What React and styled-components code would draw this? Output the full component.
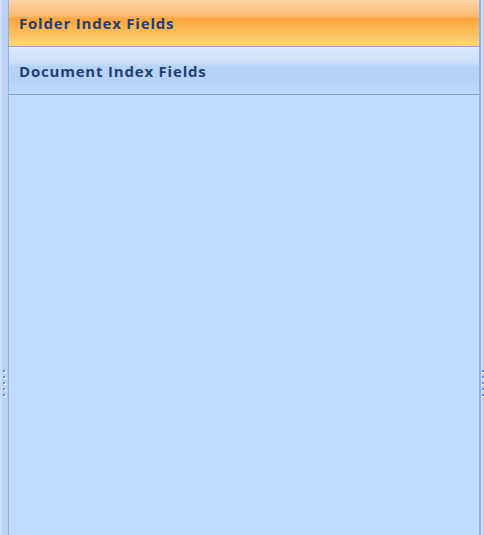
import React from "react";
import styled, { createGlobalStyle } from "styled-components";

const Global = createGlobalStyle`
  html, body { margin: 0; padding: 0; background: #c4dbfb; }
  #root { width: 484px; height: 535px; }
`;

const Frame = styled.div`
  display: flex;
  width: 484px;
  height: 535px;
  background: #c4dbfb;
  overflow: hidden;
`;

const Splitter = styled.div`
  width: ${(p) => p.$w}px;
  flex: none;
  display: flex;
  flex-direction: column;
  align-items: ${(p) => (p.$side === "left" ? "center" : "flex-start")};
  padding-top: 370px;
  gap: 4px;
  box-sizing: border-box;
  padding-left: ${(p) => (p.$side === "left" ? "0" : "1px")};
  background: linear-gradient(
    to right,
    #c9ddf9 0,
    #c9ddf9 2px,
    #b9d2f4 2px,
    #b9d2f4 100%
  );
`;

const Dot = styled.span`
  width: 2px;
  height: 2px;
  background: #6f93cc;
  box-shadow: 1px 1px 0 #f3f8ff;
`;

const Panel = styled.div`
  flex: 1;
  display: flex;
  flex-direction: column;
  border-left: 1px solid #8fb1e2;
  border-right: 2px solid #8fb1e2;
  background: #c0dbff;
`;

const Header = styled.div`
  height: ${(p) => p.$h}px;
  flex: none;
  display: flex;
  align-items: center;
  padding-left: 10px;
  padding-bottom: 1px;
  box-sizing: border-box;
  border-bottom: 1px solid ${(p) => (p.$active ? "#8aa7d2" : "#7fa2d4")};
  border-top: ${(p) => (p.$active ? "1px solid #f6d7b0" : "1px solid #e6f0fe")};
  background: ${(p) =>
    p.$active
      ? "linear-gradient(to bottom, #fed0a0 0%, #fdc07c 30%, #fca63f 40%, #fcbe5c 70%, #fdd87f 100%)"
      : "linear-gradient(to bottom, #d9e8fc 0%, #cfe2fb 30%, #b8d3f8 40%, #b6d2f8 70%, #bfdafd 100%)"};
  font-family: "Open Sans", "DejaVu Sans", sans-serif;
  font-weight: 700;
  font-size: 15px;
  color: #243f70;
  letter-spacing: 0.8px;
`;

const Body = styled.div`
  flex: 1;
  background: #c0dbff;
`;

function Grip({ side, w }) {
  return (
    <Splitter $side={side} $w={w}>
      {[0, 1, 2, 3, 4].map((i) => (
        <Dot key={i} />
      ))}
    </Splitter>
  );
}

export default function App() {
  return (
    <>
      <Global />
      <Frame>
        <Grip side="left" w={8} />
        <Panel>
          <Header $active $h={47}>Folder Index Fields</Header>
          <Header $h={48}>Document Index Fields</Header>
          <Body />
        </Panel>
        <Grip side="right" w={3} />
      </Frame>
    </>
  );
}
